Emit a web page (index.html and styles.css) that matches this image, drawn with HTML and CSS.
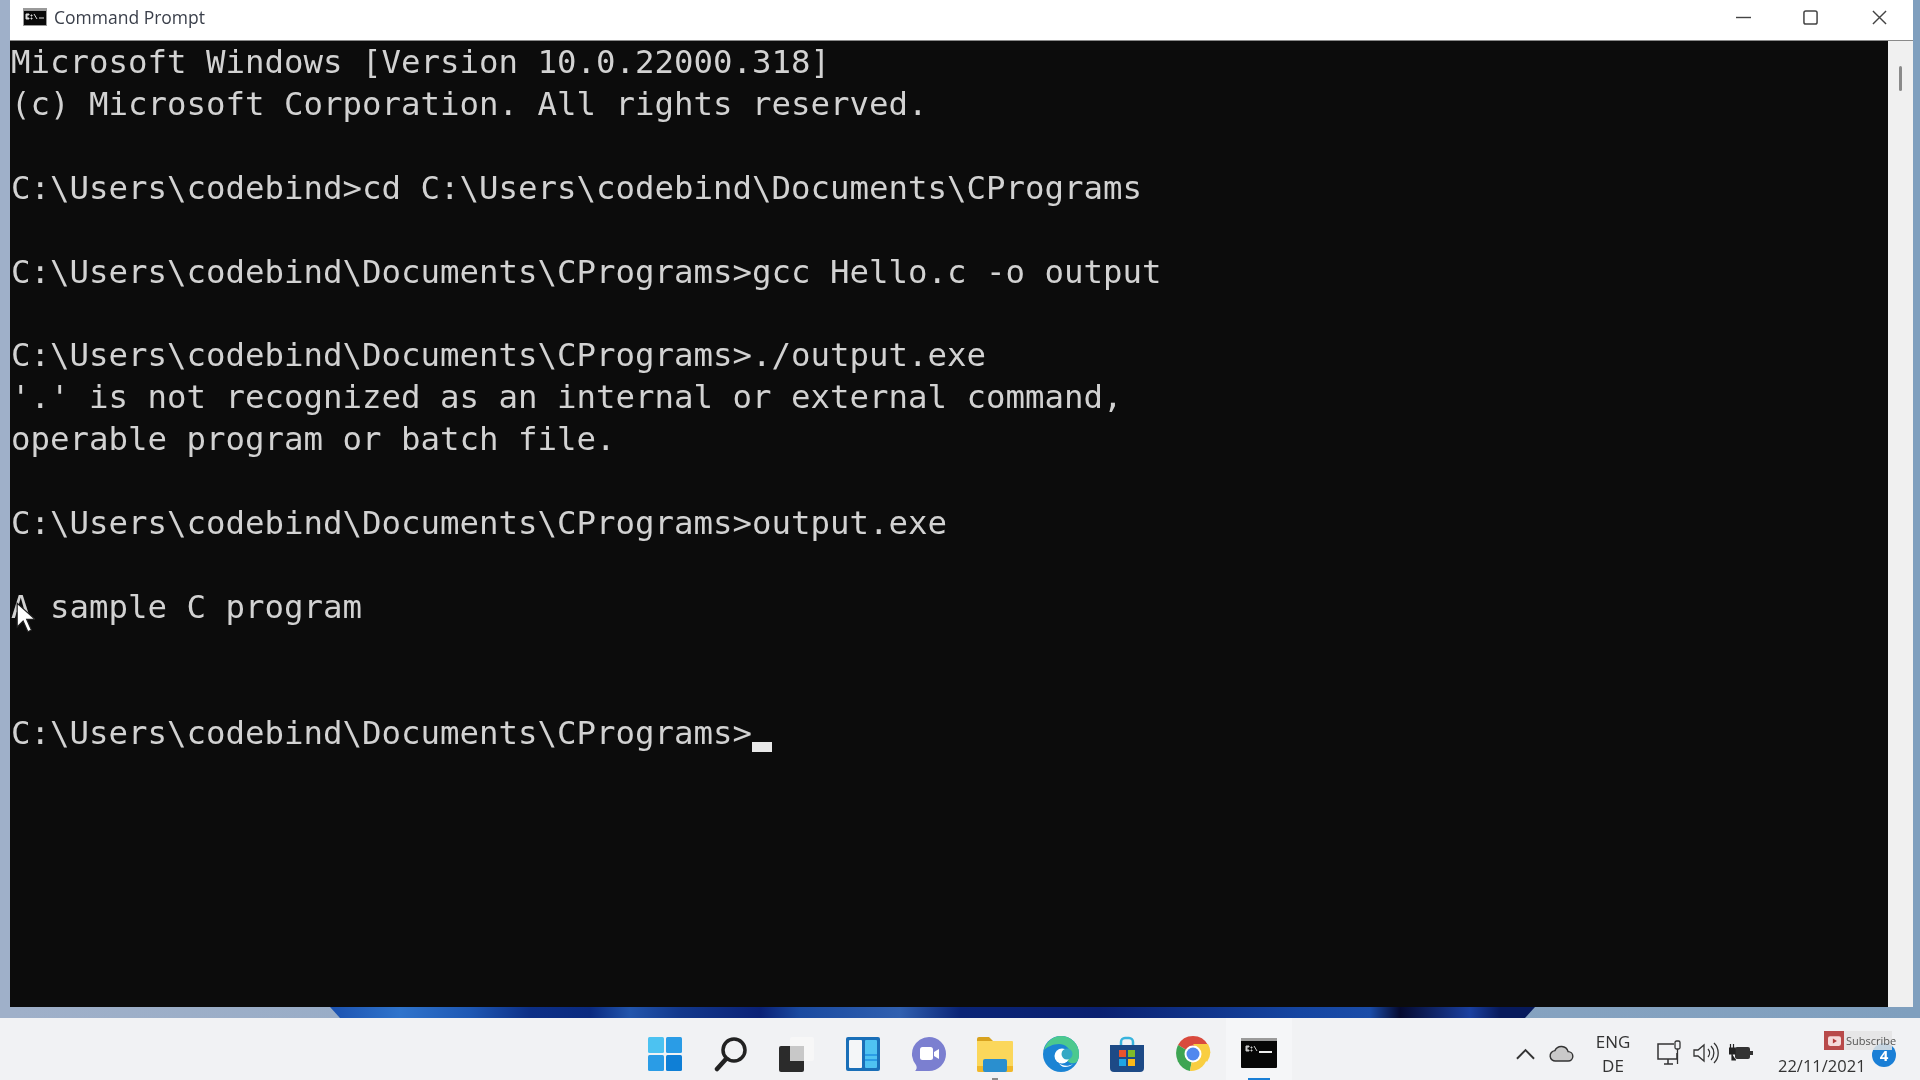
FILE: index.html
```html
<!DOCTYPE html>
<html lang="en">
<head>
<meta charset="utf-8">
<title>Command Prompt</title>
<link rel="stylesheet" href="styles.css">
</head>
<body>
<div class="desktop">
  <main class="window">
    <header class="titlebar">
      <svg class="app-icon" viewBox="0 0 24 18"><rect width="24" height="18" fill="#9a9a9a"/><rect x="1" y="3" width="22" height="14" fill="#0a0a0a"/><path d="M3 6h3v1H4v3h2v1H3zM8 7h1v1H8zM8 10h1v1H8zM11 6l3 5M16 10h5" stroke="#ddd" stroke-width="1" fill="#ddd"/></svg>
      <span class="title">Command Prompt</span>
      <div class="controls">
        <svg class="ctl ctl-min" viewBox="0 0 16 16"><path d="M0 8h16" stroke="#444" stroke-width="1.5"/></svg>
        <svg class="ctl ctl-max" viewBox="0 0 16 16"><rect x="1" y="1" width="14" height="14" rx="2" fill="none" stroke="#444" stroke-width="1.6"/></svg>
        <svg class="ctl ctl-close" viewBox="0 0 16 16"><path d="M1 1l14 14M15 1L1 15" stroke="#444" stroke-width="1.5"/></svg>
      </div>
    </header>
    <div class="body">
      <pre class="console">Microsoft Windows [Version 10.0.22000.318]
(c) Microsoft Corporation. All rights reserved.

C:\Users\codebind&gt;cd C:\Users\codebind\Documents\CPrograms

C:\Users\codebind\Documents\CPrograms&gt;gcc Hello.c -o output

C:\Users\codebind\Documents\CPrograms&gt;./output.exe
'.' is not recognized as an internal or external command,
operable program or batch file.

C:\Users\codebind\Documents\CPrograms&gt;output.exe

A sample C program


C:\Users\codebind\Documents\CPrograms&gt;<span class="cursor"></span></pre>
      <div class="scrollbar"><div class="thumb"></div></div>
      <svg class="pointer" viewBox="0 0 16 26"><path d="M1 1v20l5-5 4 9 3-1.500-4-9h7z" fill="#fff" stroke="#222" stroke-width="1"/></svg>
    </div>
  </main>
  <div class="strip"><div class="strip-blue"></div></div>
  <footer class="taskbar">
    <div class="side"></div>
    <nav class="apps">
      <div class="app"><svg class="i" viewBox="0 0 36 36"><rect x="1" y="1" width="16" height="16" rx="1.500" fill="#4cc2f1"/><rect x="19" y="1" width="16" height="16" rx="1.500" fill="#2a9ce6"/><rect x="1" y="19" width="16" height="16" rx="1.500" fill="#2a9ce6"/><rect x="19" y="19" width="16" height="16" rx="1.500" fill="#0f7fd6"/></svg></div>
      <div class="app"><svg class="i" viewBox="0 0 36 36"><circle cx="21" cy="14" r="11" fill="none" stroke="#222" stroke-width="3.500"/><path d="M13 23L4 33" stroke="#222" stroke-width="4.500" stroke-linecap="round"/></svg></div>
      <div class="app"><svg class="i" viewBox="0 0 36 36"><rect x="11" y="1" width="24" height="24" rx="2" fill="#f7f7f7"/><rect x="0" y="10" width="25" height="26" rx="2" fill="#2b2b2b"/><rect x="11" y="10" width="14" height="15" fill="#c8c8c8"/></svg></div>
      <div class="app"><svg class="i" viewBox="0 0 36 36"><rect x="1" y="1" width="34" height="34" rx="2" fill="#1a6fb8"/><rect x="4" y="4" width="13" height="28" rx="1" fill="#f4f6f8"/><rect x="20" y="4" width="12" height="28" rx="1" fill="#4fc3f2"/><path d="M20 19h12M20 24h12" stroke="#2a9ce6" stroke-width="2"/></svg></div>
      <div class="app"><svg class="i" viewBox="0 0 36 36"><path d="M18 1a17 17 0 0 1 0 34H4c2-2 2-4 1-6A17 17 0 0 1 18 1z" fill="#7b7fd0"/><rect x="9" y="11" width="13" height="13" rx="2.500" fill="#fff"/><path d="M23 16l5-3v10l-5-3z" fill="#fff"/></svg></div>
      <div class="app"><svg class="i" viewBox="0 0 36 36"><path d="M0 3a2 2 0 0 1 2-2h10l4 4h-16z" fill="#d8a21e"/><path d="M0 5h35a1 1 0 0 1 1 1v28a2 2 0 0 1-2 2H2a2 2 0 0 1-2-2z" fill="#fbd75b"/><path d="M0 34a2 2 0 0 0 2 2h32a2 2 0 0 0 2-2v-4H0z" fill="#f0b82a"/><rect x="6" y="23" width="24" height="13" rx="2" fill="#2a8fcf"/></svg><i class="running"></i></div>
      <div class="app"><svg class="i" viewBox="0 0 36 36"><circle cx="18" cy="18" r="18" fill="#1b84d4"/><path d="M18 0a18 18 0 0 1 18 18c0 4-1 8-4 9-4 1-8-1-8-4 0-2 3-3 3-6 0-5-5-9-11-9C10 8 4 11 1 14 3 6 10 0 18 0z" fill="#4cc98e"/><circle cx="19" cy="20" r="7.500" fill="#fff"/><circle cx="24" cy="18" r="5.500" fill="#35a8c4"/><path d="M16 27c3 3 9 4 14 1-2 2-5 3-8 3-3 0-5-2-6-4z" fill="#fff"/></svg></div>
      <div class="app"><svg class="i" viewBox="0 0 36 36"><path d="M12 10V6a4 4 0 0 1 4-4h4a4 4 0 0 1 4 4v4" fill="none" stroke="#38b4dd" stroke-width="2.500"/><path d="M1 9h34v23a4 4 0 0 1-4 4H5a4 4 0 0 1-4-4z" fill="#1d4a86"/><rect x="10" y="14" width="7" height="7" fill="#e9532c"/><rect x="19" y="14" width="7" height="7" fill="#7fba2a"/><rect x="10" y="23" width="7" height="7" fill="#1fa5e4"/><rect x="19" y="23" width="7" height="7" fill="#fcb918"/></svg></div>
      <div class="app"><svg class="i chrome" viewBox="0 0 36 36"><path d="M18 18L3 9A17 17 0 0 1 33 9z" fill="#d94a3d"/><path d="M18 18L3 9A17 18 0 0 0 15 35z" fill="#3ea553"/><path d="M18 18H33A17 18 0 0 1 15 35z" fill="#f9ce41"/><path d="M18 8h15a17 17 0 0 1-1 18z" fill="#f9ce41"/><circle cx="18" cy="18" r="8.500" fill="#fff"/><circle cx="18" cy="18" r="6.500" fill="#5188ee"/></svg></div>
      <div class="app app-active"><svg class="i term" viewBox="0 0 36 30"><rect width="36" height="30" rx="1" fill="#070707"/><rect width="36" height="3" fill="#9b9b9b"/><path d="M5 8h3v1H6v3h2v1H5zM10 9h1v1h-1zM10 12h1v1h-1zM13 8l3 5" stroke="#ccc" stroke-width="1" fill="#ccc"/><path d="M18 14h13" stroke="#eee" stroke-width="2"/></svg><i class="active-bar"></i></div>
    </nav>
    <div class="tray">
      <svg class="t-chev" viewBox="0 0 20 12"><path d="M1 11l9-9 9 9" fill="none" stroke="#333" stroke-width="2"/></svg>
      <svg class="t-cloud" viewBox="0 0 26 18"><path d="M7 17a5.500 5.500 0 0 1-1-11 7.500 7.500 0 0 1 14 1 5 5 0 0 1 0 10z" fill="#c9c9c9" stroke="#333" stroke-width="1.500"/></svg>
      <div class="lang"><span>ENG</span><span>DE</span></div>
      <svg class="t-net" viewBox="0 0 26 26"><path d="M17 4H1v15h19v-6M7 24h9M11 19v5" fill="none" stroke="#333" stroke-width="1.500"/><rect x="18" y="1" width="5" height="8" rx="1.500" fill="none" stroke="#333" stroke-width="1.300"/><path d="M20.500 9v15" stroke="#333" stroke-width="1.300"/></svg>
      <svg class="t-vol" viewBox="0 0 26 22"><path d="M1 8h4l6-5v16l-6-5H1z" fill="none" stroke="#333" stroke-width="1.300"/><path d="M15 7a6 6 0 0 1 0 8M18 4a10 10 0 0 1 0 14M21 1a14 14 0 0 1 0 20" fill="none" stroke="#333" stroke-width="1.300"/></svg>
      <svg class="t-bat" viewBox="0 0 24 18"><rect x="6" y="3" width="15" height="12" rx="2" fill="#333"/><rect x="21" y="7" width="3" height="4" fill="#333"/><path d="M0 4h6v6H0zM1.500 0v4M4.500 0v4M3 10v6h4" fill="#222" stroke="#222" stroke-width="1.200"/></svg>
      <div class="date">22/11/2021</div>
      <div class="badge">4</div>
      <div class="subscribe"><span class="yt"><svg class="yt-icon" viewBox="0 0 16 12"><rect width="16" height="12" rx="2.500" fill="#f4dada"/><path d="M6 3l5 3-5 3z" fill="#b33a3a"/></svg></span><span class="sub-text">Subscribe</span></div>
    </div>
  </footer>
</div>
</body>
</html>
```

FILE: styles.css
```css
html, body {
  margin: 0;
  padding: 0;
  height: 100%;
  overflow: hidden;
}

.desktop {
  width: 1920px;
  height: 1080px;
  display: flex;
  flex-direction: column;
  background: linear-gradient(90deg, #9fb0c9 0, #9fb0c9 10px, #7f9fbe 1913px, #7f9fbe 100%);
}

.window {
  margin: 0 7px 0 10px;
  height: 1007px;
  display: flex;
  flex-direction: column;
  flex: none;
}

.titlebar {
  height: 40px;
  flex: none;
  background: #fff;
  border-bottom: 1px solid #8a8a8a;
  display: flex;
  align-items: center;
  font-family: "Open Sans", "Liberation Sans", sans-serif;
}

.app-icon {
  width: 24px;
  height: 18px;
  margin: -6px 7px 0 13px;
  filter: blur(0.4px);
}

.title {
  font-size: 17.5px;
  color: #3a3f4a;
  margin-top: -6px;
  filter: blur(0.35px);
}

.controls {
  margin-left: auto;
  display: flex;
  align-items: center;
  margin-top: -6px;
  margin-right: 26px;
  filter: blur(0.4px);
}

.ctl {
  width: 15px;
  height: 15px;
  display: block;
}

.ctl-min { margin-right: 52px; }
.ctl-max { margin-right: 54px; }

.body {
  position: relative;
  flex: 1;
  display: flex;
  min-height: 0;
}

.console {
  flex: 1;
  margin: 0;
  padding: 1px 0 0 1px;
  background: #0c0c0c;
  color: #d2d2d2;
  font-family: "DejaVu Sans Mono", "Liberation Mono", monospace;
  font-size: 32.4px;
  line-height: 41.9px;
  white-space: pre;
  overflow: hidden;
  filter: blur(0.4px);
}

.cursor {
  display: inline-block;
  width: 20px;
  height: 10px;
  background: #e8e8e8;
  vertical-align: -8px;
}

.scrollbar {
  width: 25px;
  flex: none;
  background: #f0f0f0;
  position: relative;
}

.thumb {
  width: 3px;
  height: 25px;
  margin: 25px 0 0 11px;
  border-radius: 2px;
  background: #8a8a8a;
}

.pointer {
  position: absolute;
  left: 6px;
  top: 561px;
  width: 19px;
  height: 31px;
}

.strip {
  height: 11px;
  flex: none;
}

.strip-blue {
  height: 100%;
  clip-path: polygon(330px 0, 1535px 0, 1525px 100%, 340px 100%);
  background: linear-gradient(90deg,
    #1c52b0 330px, #2f74cc 400px, #1e58b4 470px, #0c2f86 530px, #0a2a80 590px,
    #2255ac 630px, #12388c 680px, #0a2176 760px, #1a4aa0 800px, #3060b0 900px,
    #0a2476 960px, #0a2070 1100px, #1546a2 1300px, #1a4ca8 1370px, #050a30 1400px,
    #1a40a0 1470px, #071a5c 1500px, #071a5c 1535px);
}

.taskbar {
  height: 62px;
  flex: none;
  background: #f1f2f4;
  display: grid;
  grid-template-columns: 1fr auto 1fr;
  padding-left: 4px;
  box-sizing: border-box;
  font-family: "Open Sans", "Liberation Sans", sans-serif;
}

.apps {
  display: flex;
}

.app {
  width: 66px;
  height: 62px;
  display: flex;
  align-items: center;
  justify-content: center;
  position: relative;
}

.i {
  width: 36px;
  height: 36px;
  display: block;
  margin-top: 10px;
  filter: blur(0.5px);
}

.term {
  height: 30px;
  margin-top: 8px;
}

.app-active {
  background: #f5f6f8;
}

.active-bar {
  position: absolute;
  left: 22px;
  bottom: 0;
  width: 22px;
  height: 2px;
  background: #1a7fd6;
}

.running {
  position: absolute;
  left: 30px;
  bottom: 0;
  width: 6px;
  height: 2px;
  background: #8a8a8a;
}

.tray {
  display: flex;
  align-items: center;
  color: #333;
  position: relative;
  min-width: 0;
  padding: 8px 0 0 224px;
  box-sizing: border-box;
  filter: blur(0.3px);
}

.t-chev {
  width: 19px;
  height: 12px;
  flex: none;
  margin-right: 14px;
  margin-top: 2px;
}

.t-cloud {
  width: 25px;
  height: 17px;
  flex: none;
  margin-right: 21px;
}

.lang {
  display: flex;
  flex-direction: column;
  align-items: center;
  width: 36px;
  flex: none;
  font-size: 17px;
  line-height: 24px;
  margin-right: 26px;
  margin-top: 2px;
}

.t-net {
  width: 26px;
  height: 26px;
  flex: none;
  margin-right: 10px;
}

.t-vol {
  width: 26px;
  height: 22px;
  flex: none;
  margin-right: 10px;
}

.t-bat {
  width: 24px;
  height: 18px;
  flex: none;
  margin-right: 25px;
}

.date {
  flex: none;
  font-size: 16.5px;
  white-space: nowrap;
  margin-top: 24px;
}

.badge {
  position: absolute;
  right: 24px;
  top: 25px;
  width: 24px;
  height: 24px;
  border-radius: 50%;
  background: #1a7fd6;
  color: #fff;
  font-size: 15px;
  font-weight: 700;
  line-height: 24px;
  text-align: center;
}

.subscribe {
  position: absolute;
  right: 28px;
  top: 13px;
  width: 68px;
  height: 19px;
  display: flex;
  align-items: center;
  background: rgba(228, 228, 228, 0.85);
  font-size: 11px;
  color: #555;
}

.yt {
  width: 20px;
  height: 19px;
  flex: none;
  display: flex;
  align-items: center;
  justify-content: center;
  background: #b84a4a;
}

.yt-icon {
  width: 13px;
  height: 10px;
}

.sub-text {
  margin-left: 2px;
  white-space: nowrap;
}
```
